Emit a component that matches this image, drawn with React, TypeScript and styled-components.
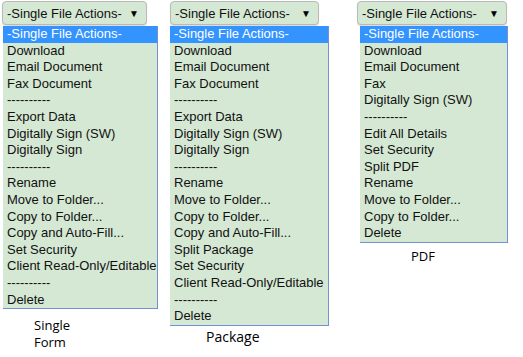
import React from 'react';
import styled, { createGlobalStyle } from "styled-components";

const GlobalStyle = createGlobalStyle`
    html, body {
        margin: 0;
        padding: 0;
        background: #ffffff;
    }
`

type ColumnPropsType = {
    selectWidth: number
    listWidth: number
    listOffset: number
    items: string[]
    label: string[]
    labelLeft: number
    labelTop: number
    labelSize: number
}

const SINGLE = '-Single File Actions-'
const DASH = '----------'

const columns: (ColumnPropsType & { left: number })[] = [
    {
        left: 2,
        selectWidth: 145,
        listWidth: 155,
        listOffset: 1,
        items: [SINGLE, 'Download', 'Email Document', 'Fax Document', DASH, 'Export Data',
            'Digitally Sign (SW)', 'Digitally Sign', DASH, 'Rename', 'Move to Folder...',
            'Copy to Folder...', 'Copy and Auto-Fill...', 'Set Security',
            'Client Read-Only/Editable', DASH, 'Delete'],
        label: ['Single', 'Form'],
        labelLeft: 32,
        labelTop: 8,
        labelSize: 13,
    },
    {
        left: 12,
        selectWidth: 149,
        listWidth: 159,
        listOffset: 0,
        items: [SINGLE, 'Download', 'Email Document', 'Fax Document', DASH, 'Export Data',
            'Digitally Sign (SW)', 'Digitally Sign', DASH, 'Rename', 'Move to Folder...',
            'Copy to Folder...', 'Copy and Auto-Fill...', 'Split Package', 'Set Security',
            'Client Read-Only/Editable', DASH, 'Delete'],
        label: ['Package'],
        labelLeft: 36,
        labelTop: 2,
        labelSize: 14,
    },
    {
        left: 28,
        selectWidth: 150,
        listWidth: 148,
        listOffset: 3,
        items: [SINGLE, 'Download', 'Email Document', 'Fax', 'Digitally Sign (SW)', DASH,
            'Edit All Details', 'Set Security', 'Split PDF', 'Rename', 'Move to Folder...',
            'Copy to Folder...', 'Delete'],
        label: ['PDF'],
        labelLeft: 54,
        labelTop: 5,
        labelSize: 13,
    },
]

const Column = (props: ColumnPropsType) => {
    return (
        <StyledColumn>
            <Select width={props.selectWidth}>
                <SelectText>{SINGLE}</SelectText>
                <Arrow>▼</Arrow>
            </Select>
            <List width={props.listWidth} offset={props.listOffset}>
                {props.items.map((item, i) => (
                    <Option key={i} active={i === 0}>{item}</Option>
                ))}
            </List>
            <Label left={props.labelLeft} top={props.labelTop} size={props.labelSize}>
                {props.label.map((line) => <div key={line}>{line}</div>)}
            </Label>
        </StyledColumn>
    );
};

export default function App() {
    return (
        <>
            <GlobalStyle/>
            <Page>
                {columns.map((c, i) => (
                    <ColumnSlot key={i} left={c.left}>
                        <Column {...c}/>
                    </ColumnSlot>
                ))}
            </Page>
        </>
    );
}

const Page = styled.div`
    display: flex;
    align-items: flex-start;
    width: 523px;
    height: 357px;
    padding-top: 1px;
    box-sizing: border-box;
    font-family: "Liberation Sans", Arial, sans-serif;
`

const ColumnSlot = styled.div<{ left: number }>`
    margin-left: ${p => p.left}px;
`

const StyledColumn = styled.div`
    display: flex;
    flex-direction: column;
`

const Select = styled.div<{ width: number }>`
    width: ${p => p.width}px;
    height: 24px;
    box-sizing: border-box;
    display: flex;
    align-items: center;
    justify-content: space-between;
    padding: 0 7px 0 4px;
    background: #d5e8d4;
    border: 1px solid #b9b9b9;
    border-radius: 4px;
    box-shadow: 0 1px 1px rgba(0, 0, 0, 0.15);
    font-size: 13px;
    color: #111;
`

const SelectText = styled.span`
    white-space: nowrap;
`

const Arrow = styled.span`
    font-size: 10px;
    color: #000;
`

const List = styled.div<{ width: number, offset: number }>`
    width: ${p => p.width}px;
    margin-left: ${p => p.offset}px;
    margin-top: 1px;
    box-sizing: border-box;
    background: #d5e8d4;
    border-right: 1px solid #7391d2;
    border-bottom: 1px solid #7391d2;
    font-size: 13px;
    color: #111;
`

const Option = styled.div<{ active: boolean }>`
    height: 16.6px;
    line-height: 16.6px;
    padding-left: 4px;
    white-space: nowrap;
    background: ${p => p.active ? '#3393ff' : 'transparent'};
    color: ${p => p.active ? '#ffffff' : '#111'};
`

const Label = styled.div<{ left: number, top: number, size: number }>`
    margin-left: ${p => p.left}px;
    margin-top: ${p => p.top}px;
    font-family: "Open Sans", "Noto Sans", sans-serif;
    font-size: ${p => p.size}px;
    line-height: 17px;
    color: #000;
`
